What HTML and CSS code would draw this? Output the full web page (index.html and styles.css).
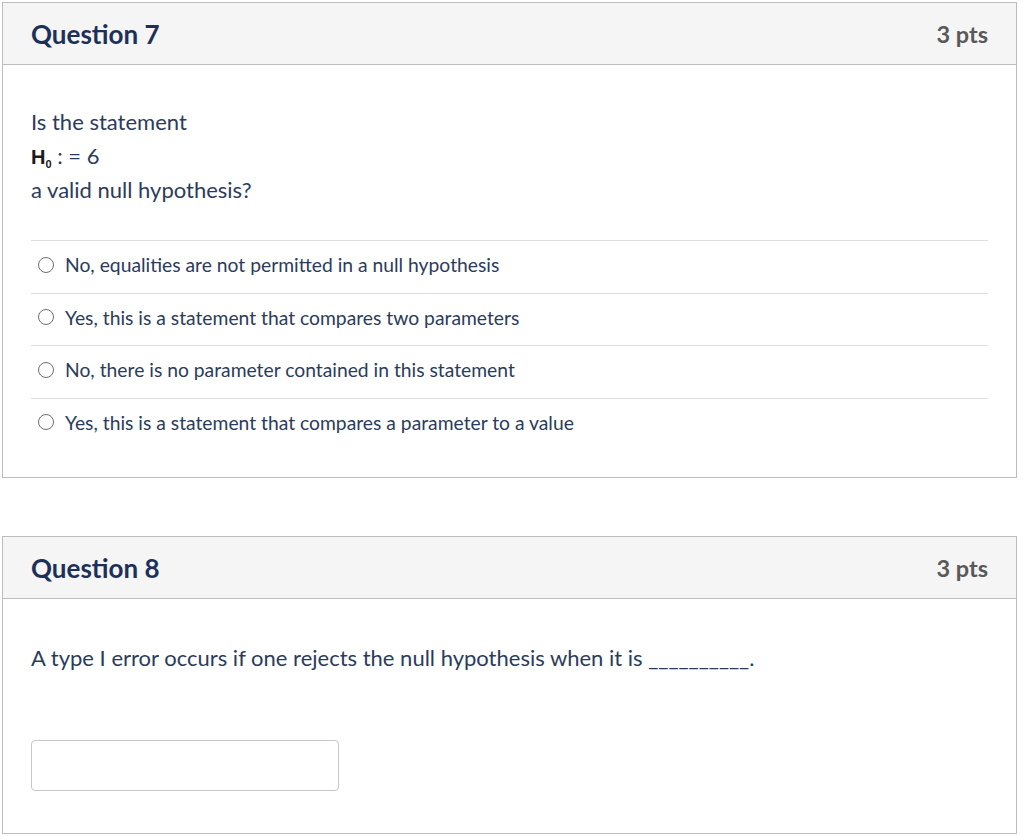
FILE: index.html
```html
<!DOCTYPE html>
<html>
<head>
<meta charset="utf-8">
<link rel="stylesheet" href="styles.css">
</head>
<body>
<div class="page">
  <section class="card q7">
    <header class="card-head">
      <h2 class="q-title">Question 7</h2>
      <span class="pts">3 pts</span>
    </header>
    <div class="card-body">
      <div class="q-text">
        <p>Is the statement</p>
        <p class="formula"><span class="h0">H<sub>0</sub></span> : = 6</p>
        <p>a valid null hypothesis?</p>
      </div>
      <ul class="answers">
        <li class="answer"><span class="radio"></span>No, equalities are not permitted in a null hypothesis</li>
        <li class="answer"><span class="radio"></span>Yes, this is a statement that compares two parameters</li>
        <li class="answer"><span class="radio"></span>No, there is no parameter contained in this statement</li>
        <li class="answer"><span class="radio"></span>Yes, this is a statement that compares a parameter to a value</li>
      </ul>
    </div>
  </section>
  <section class="card q8">
    <header class="card-head">
      <h2 class="q-title">Question 8</h2>
      <span class="pts">3 pts</span>
    </header>
    <div class="card-body">
      <p class="q-text8">A type I error occurs if one rejects the null hypothesis when it is __________.</p>
      <div class="input-box"></div>
    </div>
  </section>
</div>
</body>
</html>
```
FILE: styles.css
```css
html, body {
  margin: 0;
  padding: 0;
  background: #ffffff;
}
body {
  font-family: Lato, "Open Sans", sans-serif;
  color: #2b3b5c;
}
.page {
  padding: 2px 0 0 2px;
  width: 1015px;
}
.card {
  border: 1px solid #bdbdbd;
  background: #fff;
  box-sizing: border-box;
}
.q7 {
  height: 476px;
}
.q8 {
  margin-top: 58px;
  height: 298px;
}
.card-head {
  display: flex;
  align-items: center;
  justify-content: space-between;
  height: 61px;
  padding: 0 28px;
  background: #f5f5f5;
  border-bottom: 1px solid #bdbdbd;
}
.q-title {
  margin: 0;
  font-size: 26px;
  font-weight: 700;
  color: #1d3059;
}
.pts {
  font-size: 23.5px;
  font-weight: 700;
  color: #595959;
}
.card-body {
  padding: 0 28px;
}
.q-text {
  padding-top: 40px;
}
.q-text p {
  margin: 0;
  font-size: 22px;
  height: 34px;
  line-height: 34px;
}
.h0 {
  font-family: "Liberation Sans", Arial, sans-serif;
  font-weight: 700;
  font-size: 20px;
  color: #1a1a1a;
}
.h0 sub {
  font-size: 11px;
  vertical-align: -4px;
  line-height: 0;
}
.answers {
  list-style: none;
  margin: 33px 0 0;
  padding: 0;
}
.answer {
  display: flex;
  align-items: center;
  height: 52.5px;
  padding-bottom: 4px;
  box-sizing: border-box;
  border-top: 1px solid #dedede;
  font-size: 19.3px;
  color: #2b3b5c;
}
.radio {
  width: 16px;
  height: 16px;
  border: 1.5px solid #6f6f6f;
  border-radius: 50%;
  margin: 0 11px 0 7px;
  box-sizing: border-box;
  flex: none;
}
.q-text8 {
  margin: 44px 0 0;
  font-size: 22px;
  line-height: 30px;
  color: #2b3b5c;
}
.input-box {
  margin-top: 67px;
  width: 308px;
  height: 51px;
  box-sizing: border-box;
  border: 1px solid #c7c7c7;
  border-radius: 4px;
}
```
